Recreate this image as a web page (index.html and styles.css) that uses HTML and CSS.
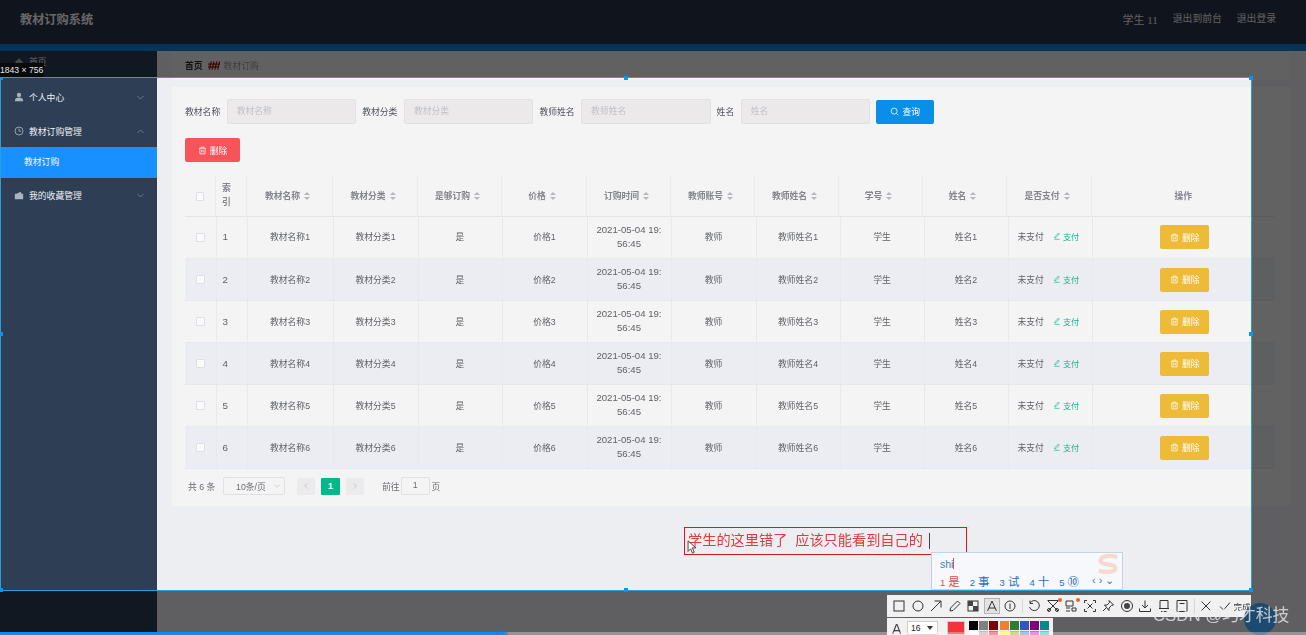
FILE: index.html
```html
<!DOCTYPE html>
<html lang="zh">
<head>
<meta charset="utf-8">
<title>教材订购系统</title>
<link rel="stylesheet" href="styles.css">
</head>
<body>
<svg class="defs" width="0" height="0">
  <symbol id="i-trash" viewBox="0 0 12 12"><path d="M1.5 3h9M4 3V1.5h4V3M2.5 3v7.5h7V3M5 5v3.5M7 5v3.5" fill="none" stroke="currentColor" stroke-width="1"/></symbol>
  <symbol id="i-down" viewBox="0 0 12 12"><path d="M2 4l4 4 4-4" fill="none" stroke="currentColor" stroke-width="1"/></symbol>
  <symbol id="i-up" viewBox="0 0 12 12"><path d="M2 8l4-4 4 4" fill="none" stroke="currentColor" stroke-width="1"/></symbol>
  <symbol id="i-edit" viewBox="0 0 12 12"><path d="M8 1.5l1.5 1.5-5 5.5-2 .5.5-2zM2 11h8" fill="none" stroke="currentColor" stroke-width="1"/></symbol>
</svg>

<header class="topbar">
  <div class="brand">教材订购系统</div>
  <nav class="topnav">
    <span class="user">学生 11</span>
    <span>退出到前台</span>
    <span>退出登录</span>
  </nav>
</header>

<div class="shell">
  <aside class="sidebar">
    <div class="menu-item menu-home">
      <svg class="menu-icon" viewBox="0 0 12 12"><path d="M6 1.5L.5 6.5H2.5V11h7V6.5h2z" fill="currentColor"/></svg>
      <span>首页</span>
    </div>
    <div class="menu-item">
      <svg class="menu-icon" viewBox="0 0 12 12"><circle cx="6" cy="3.5" r="2.6" fill="currentColor"/><path d="M1 11c0-3.200 2-4.400 5-4.400s5 1.200 5 4.400z" fill="currentColor"/></svg>
      <span>个人中心</span>
      <svg class="menu-arrow"><use href="#i-down"/></svg>
    </div>
    <div class="menu-item">
      <svg class="menu-icon" viewBox="0 0 12 12"><circle cx="6" cy="6" r="4.800" fill="none" stroke="currentColor"/><path d="M6 3v3.200h2.500" fill="none" stroke="currentColor"/></svg>
      <span>教材订购管理</span>
      <svg class="menu-arrow"><use href="#i-up"/></svg>
    </div>
    <div class="submenu-item">教材订购</div>
    <div class="menu-item">
      <svg class="menu-icon" viewBox="0 0 12 12"><path d="M1 4.500h10V11H1zM3 4.500L8 2l1 2.500" fill="currentColor"/></svg>
      <span>我的收藏管理</span>
      <svg class="menu-arrow"><use href="#i-down"/></svg>
    </div>
  </aside>

  <main class="content">
    <div class="crumbs">
      <span class="crumb-home">首页</span>
      <svg class="crumb-sep" viewBox="0 0 13 11"><path d="M3.500 1L1.500 10M6.500 1L4.500 10M9.500 1L7.500 10M12.500 1L10.500 10M0 4h13M0 7h12" fill="none" stroke="#a00d0d" stroke-width="1.300"/></svg>
      <span class="crumb-cur">教材订购</span>
    </div>

    <section class="card">
      <form class="filters">
        <label class="field"><span>教材名称</span><span class="input">教材名称</span></label>
        <label class="field"><span>教材分类</span><span class="input">教材分类</span></label>
        <label class="field"><span>教师姓名</span><span class="input">教师姓名</span></label>
        <label class="field"><span>姓名</span><span class="input">姓名</span></label>
        <span class="btn btn-query">
          <svg class="btn-icon" viewBox="0 0 12 12"><circle cx="5.500" cy="5.500" r="4" fill="none" stroke="currentColor"/><path d="M8.500 8.500L11 11" stroke="currentColor"/></svg>查询
        </span>
      </form>

      <div class="actions">
        <span class="btn btn-danger"><svg class="btn-icon"><use href="#i-trash"/></svg>删除</span>
      </div>

      <table class="grid grid-head">
        <colgroup><col><col><col><col><col><col><col><col><col><col><col><col><col></colgroup>
        <thead>
          <tr>
            <th><span class="check"></span></th>
            <th class="th-index">索引</th>
            <th class="th-sort">教材名称<i class="sort"></i></th>
            <th class="th-sort">教材分类<i class="sort"></i></th>
            <th class="th-sort">是够订购<i class="sort"></i></th>
            <th class="th-sort">价格<i class="sort"></i></th>
            <th class="th-sort">订购时间<i class="sort"></i></th>
            <th class="th-sort">教师账号<i class="sort"></i></th>
            <th class="th-sort">教师姓名<i class="sort"></i></th>
            <th class="th-sort">学号<i class="sort"></i></th>
            <th class="th-sort">姓名<i class="sort"></i></th>
            <th class="th-sort">是否支付<i class="sort"></i></th>
            <th>操作</th>
          </tr>
        </thead>
      </table>

      <table class="grid grid-body">
        <colgroup><col><col><col><col><col><col><col><col><col><col><col><col><col></colgroup>
        <tbody>
          <tr>
            <td><span class="check"></span></td><td class="td-index">1</td><td>教材名称1</td><td>教材分类1</td><td>是</td><td>价格1</td>
            <td class="td-time">2021-05-04 19:<br>56:45</td><td>教师</td><td>教师姓名1</td><td>学生</td><td>姓名1</td>
            <td class="td-pay">未支付<span class="pay"><svg class="pay-icon"><use href="#i-edit"/></svg>支付</span></td>
            <td class="td-op"><span class="btn btn-warn"><svg class="btn-icon"><use href="#i-trash"/></svg>删除</span></td>
          </tr>
          <tr>
            <td><span class="check"></span></td><td class="td-index">2</td><td>教材名称2</td><td>教材分类2</td><td>是</td><td>价格2</td>
            <td class="td-time">2021-05-04 19:<br>56:45</td><td>教师</td><td>教师姓名2</td><td>学生</td><td>姓名2</td>
            <td class="td-pay">未支付<span class="pay"><svg class="pay-icon"><use href="#i-edit"/></svg>支付</span></td>
            <td class="td-op"><span class="btn btn-warn"><svg class="btn-icon"><use href="#i-trash"/></svg>删除</span></td>
          </tr>
          <tr>
            <td><span class="check"></span></td><td class="td-index">3</td><td>教材名称3</td><td>教材分类3</td><td>是</td><td>价格3</td>
            <td class="td-time">2021-05-04 19:<br>56:45</td><td>教师</td><td>教师姓名3</td><td>学生</td><td>姓名3</td>
            <td class="td-pay">未支付<span class="pay"><svg class="pay-icon"><use href="#i-edit"/></svg>支付</span></td>
            <td class="td-op"><span class="btn btn-warn"><svg class="btn-icon"><use href="#i-trash"/></svg>删除</span></td>
          </tr>
          <tr>
            <td><span class="check"></span></td><td class="td-index">4</td><td>教材名称4</td><td>教材分类4</td><td>是</td><td>价格4</td>
            <td class="td-time">2021-05-04 19:<br>56:45</td><td>教师</td><td>教师姓名4</td><td>学生</td><td>姓名4</td>
            <td class="td-pay">未支付<span class="pay"><svg class="pay-icon"><use href="#i-edit"/></svg>支付</span></td>
            <td class="td-op"><span class="btn btn-warn"><svg class="btn-icon"><use href="#i-trash"/></svg>删除</span></td>
          </tr>
          <tr>
            <td><span class="check"></span></td><td class="td-index">5</td><td>教材名称5</td><td>教材分类5</td><td>是</td><td>价格5</td>
            <td class="td-time">2021-05-04 19:<br>56:45</td><td>教师</td><td>教师姓名5</td><td>学生</td><td>姓名5</td>
            <td class="td-pay">未支付<span class="pay"><svg class="pay-icon"><use href="#i-edit"/></svg>支付</span></td>
            <td class="td-op"><span class="btn btn-warn"><svg class="btn-icon"><use href="#i-trash"/></svg>删除</span></td>
          </tr>
          <tr>
            <td><span class="check"></span></td><td class="td-index">6</td><td>教材名称6</td><td>教材分类6</td><td>是</td><td>价格6</td>
            <td class="td-time">2021-05-04 19:<br>56:45</td><td>教师</td><td>教师姓名6</td><td>学生</td><td>姓名6</td>
            <td class="td-pay">未支付<span class="pay"><svg class="pay-icon"><use href="#i-edit"/></svg>支付</span></td>
            <td class="td-op"><span class="btn btn-warn"><svg class="btn-icon"><use href="#i-trash"/></svg>删除</span></td>
          </tr>
        </tbody>
      </table>

      <div class="pager">
        <span class="pager-total">共 6 条</span>
        <span class="pager-size">10条/页<svg class="pager-caret"><use href="#i-down"/></svg></span>
        <span class="pager-nav"><svg class="pager-arrow" viewBox="0 0 12 12"><path d="M8 2L4 6l4 4" fill="none" stroke="currentColor"/></svg></span>
        <span class="pager-cur">1</span>
        <span class="pager-nav"><svg class="pager-arrow" viewBox="0 0 12 12"><path d="M4 2l4 4-4 4" fill="none" stroke="currentColor"/></svg></span>
        <span class="pager-goto">前往</span>
        <span class="pager-input">1</span>
        <span>页</span>
      </div>
    </section>
  </main>
</div>

<div class="selection">
  <i class="handle h-tl"></i><i class="handle h-tc"></i><i class="handle h-tr"></i>
  <i class="handle h-ml"></i><i class="handle h-mr"></i>
  <i class="handle h-bl"></i><i class="handle h-bc"></i><i class="handle h-br"></i>
</div>
<div class="size-tag">1843 × 756</div>

<div class="note"><span class="note-text">学生的这里错了  应该只能看到自己的</span><i class="note-caret"></i></div>
<svg class="pointer" viewBox="0 0 11 16"><path d="M1 1v12l3-3 2 5 2-1-2-5h4z" fill="#fff" stroke="#333" stroke-width="1"/></svg>

<div class="ime">
  <svg class="ime-logo" viewBox="0 0 30 24"><path d="M26 4C16 0 6 3 6 8c0 6 18 3 18 9 0 4-10 6-20 3" fill="none" stroke="#f6d9cf" stroke-width="5"/></svg>
  <div class="ime-input">shi<i class="ime-caret"></i></div>
  <div class="ime-list">
    <span class="ime-on"><small>1</small>是</span>
    <span><small>2</small>事</span>
    <span><small>3</small>试</span>
    <span><small>4</small>十</span>
    <span><small>5</small>⑩</span>
    <span class="ime-nav">‹ › ⌄</span>
  </div>
</div>

<div class="toolbar">
  <svg class="tool" viewBox="0 0 14 14"><rect x="2" y="2" width="10" height="10"/></svg>
  <svg class="tool" viewBox="0 0 14 14"><circle cx="7" cy="7" r="5"/></svg>
  <svg class="tool" viewBox="0 0 14 14"><path d="M2 12L12 2M5.500 2H12v6.500"/></svg>
  <svg class="tool" viewBox="0 0 14 14"><path d="M9.500 2L12 4.500 5 11.500l-3 .5.500-3z"/></svg>
  <svg class="tool" viewBox="0 0 14 14"><rect x="2" y="2" width="10" height="10"/><path class="solid" d="M2 2h5v5H2zM7 7h5v5H7z"/></svg>
  <svg class="tool tool-on" viewBox="0 0 14 14"><path d="M2.500 12L7 2l4.500 10M4 9h6"/></svg>
  <svg class="tool" viewBox="0 0 14 14"><circle cx="7" cy="7" r="5"/><path d="M7 4.500V10"/></svg>
  <i class="tool-sep"></i>
  <svg class="tool" viewBox="0 0 14 14"><path d="M3 4a5 5 0 1 1-.500 4M3 1.500V4.500h3"/></svg>
  <span class="tool-dot"><svg class="tool" viewBox="0 0 14 14"><path d="M2 2l10 10M12 2L2 12"/><circle cx="3" cy="11" r="1.500"/><circle cx="11" cy="11" r="1.500"/><path d="M1.500 1.500h11"/></svg></span>
  <span class="tool-dot"><svg class="tool" viewBox="0 0 14 14"><path d="M2 2h7v5H2zM2 9h4M2 12h4M8 9h4v3H8z"/></svg></span>
  <svg class="tool" viewBox="0 0 14 14"><path d="M1.500 4V1.500H4M10 1.500h2.500V4M12.500 10v2.500H10M4 12.500H1.500V10M4.500 4.500l5 5M9.500 4.500l-5 5"/></svg>
  <svg class="tool" viewBox="0 0 14 14"><path d="M8 1.500l4.500 4.500-2 .5-2.500 2.500v2.500L3.500 6H6l2.500-2.500zM5 9l-3 3"/></svg>
  <svg class="tool" viewBox="0 0 14 14"><circle cx="7" cy="7" r="5.500"/><circle class="solid" cx="7" cy="7" r="3"/></svg>
  <svg class="tool" viewBox="0 0 14 14"><path d="M7 1.500V9M4 6l3 3 3-3M1.500 9.500v3h11v-3"/></svg>
  <svg class="tool" viewBox="0 0 14 14"><path d="M3 1.500h8v8H3zM2 9.500h10M4 12.500h6"/></svg>
  <svg class="tool" viewBox="0 0 14 14"><path d="M2 1.500h10v11H2zM4.500 4.500h5"/></svg>
  <i class="tool-sep"></i>
  <svg class="tool" viewBox="0 0 14 14"><path d="M2.500 2.500l9 9M11.500 2.500l-9 9"/></svg>
  <span class="tool-done"><svg class="tool" viewBox="0 0 14 14"><path d="M2 7.500l3.500 3.500L12 3.500"/></svg>完成</span>
</div>

<div class="stylebar">
  <span class="style-a">A</span>
  <span class="style-size">16<i class="style-caret"></i></span>
  <i class="style-cur"></i>
  <div class="swatches">
    <i class="s1"></i><i class="s2"></i><i class="s3"></i><i class="s4"></i><i class="s5"></i><i class="s6"></i><i class="s7"></i><i class="s8"></i>
    <i class="s9"></i><i class="s10"></i><i class="s11"></i><i class="s12"></i><i class="s13"></i><i class="s14"></i><i class="s15"></i><i class="s16"></i>
  </div>
</div>

<div class="avatar"></div>
<div class="watermark">CSDN @巧才科技</div>

<div class="progress"><i class="progress-fill"></i><i class="progress-knob"></i></div>
</body>
</html>
```

FILE: styles.css
```css
* { box-sizing: border-box; }
html, body { margin: 0; height: 635px; overflow: hidden; }
body {
  position: relative;
  font-family: "Liberation Sans", "Noto Sans CJK SC", sans-serif;
  font-size: 8.8px;
  color: #606266;
  background: #edeef2;
  filter: blur(.35px);
}
.defs { position: absolute; }
i { display: block; font-style: normal; }

/* top bar */
.topbar {
  height: 51px;
  display: flex;
  align-items: center;
  justify-content: space-between;
  padding: 0 30px 7px 20px;
  background: #28324a;
  border-bottom: 7px solid #0985e3;
  color: #fff;
}
.brand { font-size: 12.200px; font-weight: 700; color: #fff; }
.topnav { display: flex; gap: 15px; font-size: 9.800px; color: #eee; }
.user { font-family: "Liberation Serif", "Noto Sans CJK SC", serif; font-size: 11px; }

/* layout */
.shell { display: flex; height: 584px; }
.sidebar { width: 157px; flex: none; background: #2d3e55; color: #fff; }
.content { width: 1149px; flex: none; padding: 0 16px 0 15px; }

/* sidebar */
.menu-item {
  height: 34px;
  display: flex;
  align-items: center;
  gap: 5px;
  padding: 0 12px 0 14px;
  color: #f1f1f3;
}
.menu-home { height: 29px; padding-bottom: 8px; }
.menu-icon { width: 10px; height: 10px; color: #aab2bd; flex: none; }
.menu-arrow { width: 9px; height: 9px; margin-left: auto; color: #7f8b9c; }
.submenu-item {
  height: 31px;
  margin-top: -1px;
  padding-left: 24px;
  line-height: 31px;
  background: #1890ff;
  color: #f4f8ff;
}

/* breadcrumb */
.crumbs {
  height: 29px;
  display: flex;
  align-items: center;
  padding: 0 13px 0 13px;
  background: #f3f3f5;
  color: #9a9a9e;
}
.crumb-home { color: #303133; font-weight: 700; }
.crumb-sep { width: 12px; height: 11px; margin: 0 4px 0 5px; }

/* card */
.card {
  height: 419px;
  margin-top: 7px;
  padding: 12px 13px 0;
  background: #f4f4f5;
}
.filters { display: flex; align-items: center; gap: 6px; margin: 0; }
.field { display: flex; align-items: center; gap: 6.500px; color: #50525a; }
.input {
  width: 129.500px;
  height: 25px;
  padding-left: 9px;
  line-height: 23px;
  background: #ece9ea;
  border: 1px solid #e2e2e4;
  border-radius: 2px;
  color: #c0c2c8;
}
.btn {
  display: inline-flex;
  align-items: center;
  justify-content: center;
  gap: 3px;
  border-radius: 2px;
  color: #fff;
}
.btn-icon { width: 9px; height: 9px; flex: none; }
.btn-query { width: 58px; height: 24px; background: #0a8fe8; }
.actions { margin-top: 14px; height: 38px; }
.btn-danger { width: 55px; height: 24px; background: #f6545b; }
.btn-warn { width: 49px; height: 24px; background: #edbb38; }

/* tables */
.grid { width: 1090px; table-layout: fixed; border-collapse: collapse; }
.grid th, .grid td { padding: 0; text-align: center; font-weight: 400; }
.grid-head tr { height: 40px; border-bottom: 1px solid #e3e4e8; }
.grid-head th { border-right: 1px solid #ebecef; color: #85868b; font-weight: 700; }
.grid-head th:last-child { border-right: 0; }
.grid .th-sort { padding-right: 3px; }
.grid-head col:nth-child(1) { width: 30px; }
.grid-head col:nth-child(2) { width: 31px; }
.grid-head col:nth-child(3) { width: 86px; }
.grid-head col:nth-child(4) { width: 85px; }
.grid-head col:nth-child(5) { width: 84px; }
.grid-head col:nth-child(6) { width: 85px; }
.grid-head col:nth-child(7),
.grid-head col:nth-child(8),
.grid-head col:nth-child(9),
.grid-head col:nth-child(10),
.grid-head col:nth-child(11) { width: 84px; }
.grid-head col:nth-child(12) { width: 85px; }
.grid-head col:nth-child(13) { width: 184px; }
.grid .th-index { padding: 0 8px 0 6.500px; text-align: left; line-height: 13.500px; }

.grid-body col:nth-child(1),
.grid-body col:nth-child(2) { width: 31px; }
.grid-body col:nth-child(3) { width: 86px; }
.grid-body col:nth-child(4) { width: 85px; }
.grid-body col:nth-child(5) { width: 84px; }
.grid-body col:nth-child(6) { width: 85px; }
.grid-body col:nth-child(7) { width: 84px; }
.grid-body col:nth-child(8) { width: 85px; }
.grid-body col:nth-child(9),
.grid-body col:nth-child(10),
.grid-body col:nth-child(11),
.grid-body col:nth-child(12) { width: 84px; }
.grid-body col:nth-child(13) { width: 183px; }
.grid-body tr { height: 42px; }
.grid-body tr:nth-child(even) { background: #ecedf2; }
.grid-body td { padding-bottom: 1px; border-right: 1px solid #e8e9ed; border-bottom: 1px solid #e8e9ed; }
.grid-body td:last-child { border-right: 0; }
.grid .td-index { text-align: left; padding-left: 6px; font-size: 9.800px; }
.td-time { line-height: 14px; font-size: 9.600px; }
.grid .td-pay { text-align: left; padding-left: 9px; }
.grid .td-op { padding: 0 0 0 2px; }
.pay { display: inline-flex; align-items: center; gap: 2px; margin-left: 9px; color: #17b38d; font-size: 8.200px; }
.pay-icon { width: 8px; height: 8px; }

.check {
  display: inline-block;
  width: 8.500px;
  height: 8.500px;
  vertical-align: middle;
  background: #fbfbfc;
  border: 1px solid #dcdfe6;
  border-radius: 1px;
}
.sort {
  display: inline-block;
  position: relative;
  width: 6px;
  height: 8px;
  margin-left: 4px;
  vertical-align: -1px;
}
.sort::before, .sort::after {
  content: "";
  position: absolute;
  left: 0;
  border-left: 3px solid transparent;
  border-right: 3px solid transparent;
}
.sort::before { top: 0; border-bottom: 3.500px solid #b5b7bd; }
.sort::after { bottom: 0; border-top: 3.500px solid #b5b7bd; }

/* pager */
.pager { display: flex; align-items: center; height: 18px; margin-top: 8px; padding-left: 3px; color: #6a6c72; }
.pager-total { width: 35px; }
.pager-size {
  display: flex;
  align-items: center;
  justify-content: space-between;
  width: 62px;
  height: 18px;
  margin-right: 12px;
  padding: 0 3px 0 12px;
  border: 1px solid #dfe1e6;
  border-radius: 2px;
}
.pager-caret { width: 8px; height: 8px; color: #c0c4cc; }
.pager-nav {
  display: flex;
  align-items: center;
  justify-content: center;
  width: 18px;
  height: 17px;
  background: #ebebee;
  color: #b5b7bc;
  border-radius: 1px;
}
.pager-arrow { width: 8px; height: 8px; }
.pager-cur {
  width: 19px;
  height: 17px;
  margin: 0 6px;
  line-height: 17px;
  text-align: center;
  background: #00b98b;
  color: #fff;
  font-weight: 700;
  border-radius: 1px;
}
.pager-goto { margin-left: 18px; }
.pager-input {
  width: 29px;
  height: 18px;
  margin: 0 2px 0 1px;
  line-height: 15px;
  text-align: center;
  border: 1px solid #dfe1e6;
  border-radius: 2px;
}

/* screenshot tool overlay */
.selection {
  position: absolute;
  left: 0;
  top: 77px;
  width: 1252px;
  height: 514px;
  border: 1px solid #2a9ed8;
  box-shadow: 0 0 0 2000px rgba(0, 0, 0, .6);
}
.handle { position: absolute; width: 4px; height: 4px; background: #0a96ea; }
.h-tl { left: -2px; top: -2px; }
.h-tc { left: 623px; top: -2px; }
.h-tr { right: -2px; top: -2px; }
.h-ml { left: -2px; top: 254px; }
.h-mr { right: -2px; top: 254px; }
.h-bl { left: -2px; bottom: -2px; }
.h-bc { left: 623px; bottom: -2px; }
.h-br { right: -2px; bottom: -2px; }
.size-tag {
  position: absolute;
  left: 0;
  top: 63px;
  width: 44px;
  height: 14px;
  line-height: 14px;
  background: #0a0a0c;
  color: #e8e8e8;
  font-size: 8.600px;
  white-space: nowrap;
}

.note {
  position: absolute;
  left: 684px;
  top: 527px;
  width: 283px;
  height: 28px;
  padding-left: 3px;
  line-height: 25px;
  border: 1.500px solid #e0141f;
  color: #df3a40;
  font-size: 14.200px;
}
.note-text { white-space: pre; }
.note-caret { position: absolute; left: 244px; top: 5px; width: 1px; height: 16px; background: #444; }
.pointer { position: absolute; left: 687px; top: 540px; width: 10px; height: 14px; }

.ime {
  position: absolute;
  left: 931px;
  top: 552px;
  width: 192px;
  height: 38px;
  padding: 3px 8px;
  background: #f6f8fb;
  border: 1px solid #c6d2e0;
  color: #2b6fb5;
}
.ime-logo { position: absolute; right: 1px; top: 1px; width: 26px; height: 20px; }
.ime-input { display: flex; height: 15px; align-items: center; font-size: 10.500px; color: #3a7fc4; }
.ime-caret { width: 1px; height: 11px; background: #d6553c; }
.ime-list { display: flex; align-items: center; gap: 10px; height: 19px; font-size: 11.500px; white-space: nowrap; }
.ime-list small { font-size: 9.500px; margin-right: 3px; }
.ime-on { color: #d9534a; }
.ime-nav { margin-left: 3px; color: #4b7cad; font-size: 11px; }

.toolbar {
  position: absolute;
  left: 887px;
  top: 595px;
  width: 364px;
  height: 22px;
  padding: 0 6px 0 5px;
  display: flex;
  align-items: center;
  gap: 4.500px;
  background: #f1f1f2;
}
.tool {
  width: 14px;
  height: 14px;
  flex: none;
  fill: none;
  stroke: #333;
  stroke-width: 1;
}
.tool .solid { fill: #444; stroke: none; }
.tool-on { outline: 1px solid #b5b5b5; background: #e3e3e3; }
.tool-sep { width: 1px; height: 14px; background: #d6d6d6; flex: none; }
.tool-dot { position: relative; display: flex; }
.tool-dot::after {
  content: "";
  position: absolute;
  right: -2px;
  top: -1px;
  width: 4px;
  height: 4px;
  border-radius: 50%;
  background: #e8642a;
}
.tool-done { display: flex; align-items: center; gap: 2px; color: #333; font-size: 8.500px; white-space: nowrap; }

.stylebar {
  position: absolute;
  left: 887px;
  top: 618px;
  width: 166px;
  height: 17px;
  padding: 3px 0 0 5px;
  display: flex;
  align-items: flex-start;
  background: #f1f1f2;
}
.style-a { width: 15px; font-size: 14px; line-height: 16px; color: #444; }
.style-size {
  position: relative;
  width: 31px;
  height: 14px;
  padding-left: 3px;
  line-height: 13px;
  font-size: 8.500px;
  color: #222;
  background: #fff;
  border: 1px solid #ccc;
}
.style-caret {
  position: absolute;
  right: 4px;
  top: 4px;
  border-left: 3px solid transparent;
  border-right: 3px solid transparent;
  border-top: 4px solid #333;
}
.style-cur { width: 18px; height: 14px; margin-left: 9px; background: #f5333a; border: 1px solid #ccc; }
.swatches {
  display: grid;
  grid-template-columns: repeat(8, 9px);
  grid-auto-rows: 9px;
  column-gap: 1.200px;
  row-gap: 1px;
  margin-left: 4px;
}
.s1 { background: #000; }
.s2 { background: #808080; }
.s3 { background: #800000; }
.s4 { background: #f08030; }
.s5 { background: #2e7d32; }
.s6 { background: #2f55c8; }
.s7 { background: #800080; }
.s8 { background: #008b8b; }
.s9 { background: #fff; }
.s10 { background: #c0c0c0; }
.s11 { background: #f56565; }
.s12 { background: #ffff33; }
.s13 { background: #a6d83a; }
.s14 { background: #66b0e8; }
.s15 { background: #f050f0; }
.s16 { background: #44dddd; }

.avatar {
  position: absolute;
  left: 1244px;
  top: 603px;
  width: 32px;
  height: 32px;
  border-radius: 50%;
  background: #1d4a70;
}
.watermark {
  position: absolute;
  left: 1153px;
  top: 605px;
  color: rgba(235, 235, 235, .8);
  font-size: 16.800px;
  line-height: 22px;
  white-space: nowrap;
}

.progress {
  position: absolute;
  left: 0;
  right: 0;
  bottom: 0;
  height: 3px;
  background: rgba(255, 255, 255, .32);
}
.progress-fill { width: 500px; height: 3px; background: #0090ff; }
.progress-knob {
  position: absolute;
  left: 497px;
  top: 0;
  width: 10px;
  height: 10px;
  border-radius: 50%;
  background: #0090ff;
  box-shadow: 0 0 0 2px rgba(20, 120, 210, .5);
}
```
